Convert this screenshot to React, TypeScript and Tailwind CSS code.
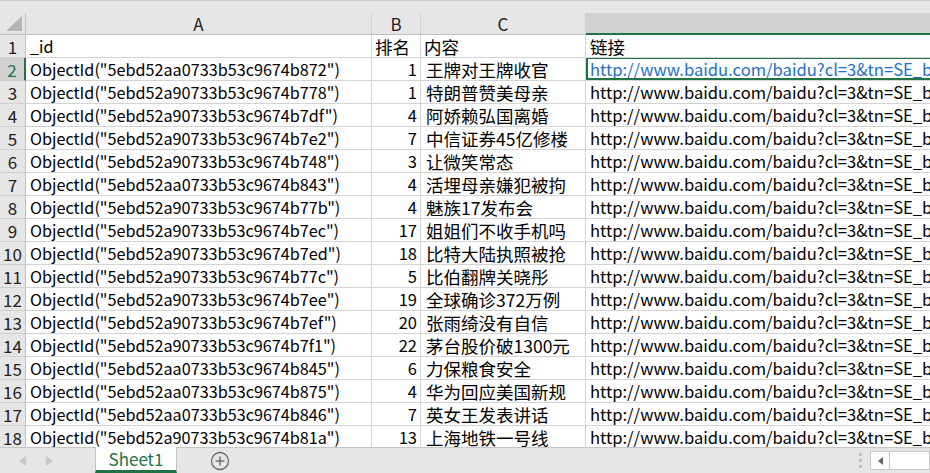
import React from "react";

const ids = [
  "5ebd52aa0733b53c9674b872",
  "5ebd52a90733b53c9674b778",
  "5ebd52a90733b53c9674b7df",
  "5ebd52a90733b53c9674b7e2",
  "5ebd52a90733b53c9674b748",
  "5ebd52aa0733b53c9674b843",
  "5ebd52a90733b53c9674b77b",
  "5ebd52a90733b53c9674b7ec",
  "5ebd52a90733b53c9674b7ed",
  "5ebd52a90733b53c9674b77c",
  "5ebd52a90733b53c9674b7ee",
  "5ebd52a90733b53c9674b7ef",
  "5ebd52a90733b53c9674b7f1",
  "5ebd52aa0733b53c9674b845",
  "5ebd52aa0733b53c9674b875",
  "5ebd52aa0733b53c9674b846",
  "5ebd52a90733b53c9674b81a",
];
const ranks = [1, 1, 4, 7, 3, 4, 4, 17, 18, 5, 19, 20, 22, 6, 4, 7, 13];
const titles = [
  "王牌对王牌收官",
  "特朗普赞美母亲",
  "阿娇赖弘国离婚",
  "中信证券45亿修楼",
  "让微笑常态",
  "活埋母亲嫌犯被拘",
  "魅族17发布会",
  "姐姐们不收手机吗",
  "比特大陆执照被抢",
  "比伯翻牌关晓彤",
  "全球确诊372万例",
  "张雨绮没有自信",
  "茅台股价破1300元",
  "力保粮食安全",
  "华为回应美国新规",
  "英女王发表讲话",
  "上海地铁一号线",
];
const link = "http://www.baidu.com/baidu?cl=3&tn=SE_baiduhomet8_jmjb7mjw&wd=";

function RowHead({ n, active }: { n: number; active?: boolean }) {
  return (
    <div
      className={
        "w-[26px] shrink-0 text-center text-[17px] border-b border-[#d0d0d0] " +
        (active
          ? "bg-[#d2d2d2] text-[#217346] border-r-2 border-r-[#217346]"
          : "bg-[#e6e6e6] text-[#222] border-r border-r-[#bfbfbf]")
      }
    >
      {n}
    </div>
  );
}

export default function App() {
  return (
    <div
      className="w-[930px] h-[473px] overflow-hidden bg-white flex flex-col text-[16.2px] leading-[22px] text-black"
      style={{ fontFamily: '"Noto Sans CJK SC", "Noto Sans", sans-serif' }}
    >
      <div className="h-[13px] shrink-0 bg-[#e6e6e6] border-t border-[#c6c6c6]" />
      {/* column headers */}
      <div className="h-[22px] shrink-0 flex bg-[#e6e6e6] border-b border-[#bfbfbf] text-[#222] text-[17px]">
        <div className="w-[26px] shrink-0 border-r border-[#bfbfbf] flex items-end justify-end pr-[3px] pb-[3px]">
          <svg width="16" height="15" viewBox="0 0 16 15">
            <polygon points="16,0 16,15 0,15" fill="#b5b5b5" />
          </svg>
        </div>
        <div className="w-[346px] shrink-0 text-center border-r border-[#d0d0d0]">A</div>
        <div className="w-[49px] shrink-0 text-center border-r border-[#d0d0d0]">B</div>
        <div className="w-[165px] shrink-0 text-center border-r border-[#d0d0d0]">C</div>
        <div className="flex-1 bg-[#d2d2d2] border-b-2 border-[#217346] -mb-[1px]" />
      </div>
      {/* grid */}
      <div className="flex-1 overflow-hidden">
        <div className="flex h-[23px] leading-[23px]">
          <RowHead n={1} />
          <div className="w-[346px] shrink-0 pl-[4px] border-r border-b border-[#d4d4d4]">_id</div>
          <div className="w-[49px] shrink-0 pl-[3px] text-[17.5px] border-r border-b border-[#d4d4d4] whitespace-nowrap overflow-hidden">排名</div>
          <div className="w-[165px] shrink-0 pl-[3px] text-[17.5px] border-r border-b border-[#d4d4d4]">内容</div>
          <div className="flex-1 pl-[4px] text-[17.5px] border-b border-[#d4d4d4]">链接</div>
        </div>
        {ids.map((id, i) => (
          <div key={id} className="flex h-[23px] leading-[23px]">
            <RowHead n={i + 2} active={i === 0} />
            <div className="w-[346px] shrink-0 pl-[4px] border-r border-b border-[#d4d4d4] whitespace-nowrap overflow-hidden">
              ObjectId("{id}")
            </div>
            <div className="w-[49px] shrink-0 pr-[3px] text-right text-[16.5px] border-r border-b border-[#d4d4d4]">{ranks[i]}</div>
            <div className="w-[165px] shrink-0 pl-[5px] text-[17.5px] border-r border-b border-[#d4d4d4] whitespace-nowrap overflow-hidden">
              {titles[i]}
            </div>
            <div
              className={
                "flex-1 min-w-0 pl-[4px] text-[16.6px] border-b border-[#d4d4d4] whitespace-nowrap overflow-hidden relative " +
                (i === 0 ? "text-[#1f6fc5]" : "")
              }
            >
              {link}
              {i === 0 && <div className="absolute -top-[1px] left-0 -right-[4px] bottom-0 border-2 border-[#217346]" />}
            </div>
          </div>
        ))}
      </div>
      {/* sheet tabs */}
      <div className="h-[26px] shrink-0 bg-[#e6e6e6] border-t border-[#c6c6c6] flex items-stretch relative z-10">
        <div className="w-[95px] shrink-0 flex items-center pl-[19px] gap-[20px]">
          <svg width="7" height="10" viewBox="0 0 7 10"><polygon points="7,0 7,10 0,5" fill="#c8c8c8" /></svg>
          <svg width="7" height="10" viewBox="0 0 7 10"><polygon points="0,0 0,10 7,5" fill="#c8c8c8" /></svg>
        </div>
        <div className="w-[82px] shrink-0 -mt-[1px] bg-white border-x border-[#c6c6c6] border-b-[3px] border-b-[#217346] text-[#217346] text-[17px] text-center leading-[24px]">
          Sheet1
        </div>
        <div className="w-[86px] shrink-0 flex items-center justify-center">
          <svg width="20" height="20" viewBox="0 0 20 20">
            <circle cx="10" cy="10" r="8.5" fill="none" stroke="#6b6b6b" strokeWidth="1.3" />
            <line x1="10" y1="5.5" x2="10" y2="14.5" stroke="#6b6b6b" strokeWidth="1.4" />
            <line x1="5.5" y1="10" x2="14.5" y2="10" stroke="#6b6b6b" strokeWidth="1.4" />
          </svg>
        </div>
        <div className="flex-1" />
        <div className="w-[18px] shrink-0 flex flex-col items-center justify-center gap-[3px] pr-[1px]">
          <div className="w-[3px] h-[3px] bg-[#c0c0c0]" />
          <div className="w-[3px] h-[3px] bg-[#c0c0c0]" />
          <div className="w-[3px] h-[3px] bg-[#c0c0c0]" />
        </div>
        <div className="w-[60px] shrink-0 my-[3px] bg-white border border-[#c6c6c6] flex">
          <div className="w-[19px] border-r border-[#c6c6c6] flex items-center justify-center">
            <svg width="5" height="8" viewBox="0 0 5 8"><polygon points="5,0 5,8 0,4" fill="#606060" /></svg>
          </div>
          <div className="flex-1" />
        </div>
      </div>
    </div>
  );
}
